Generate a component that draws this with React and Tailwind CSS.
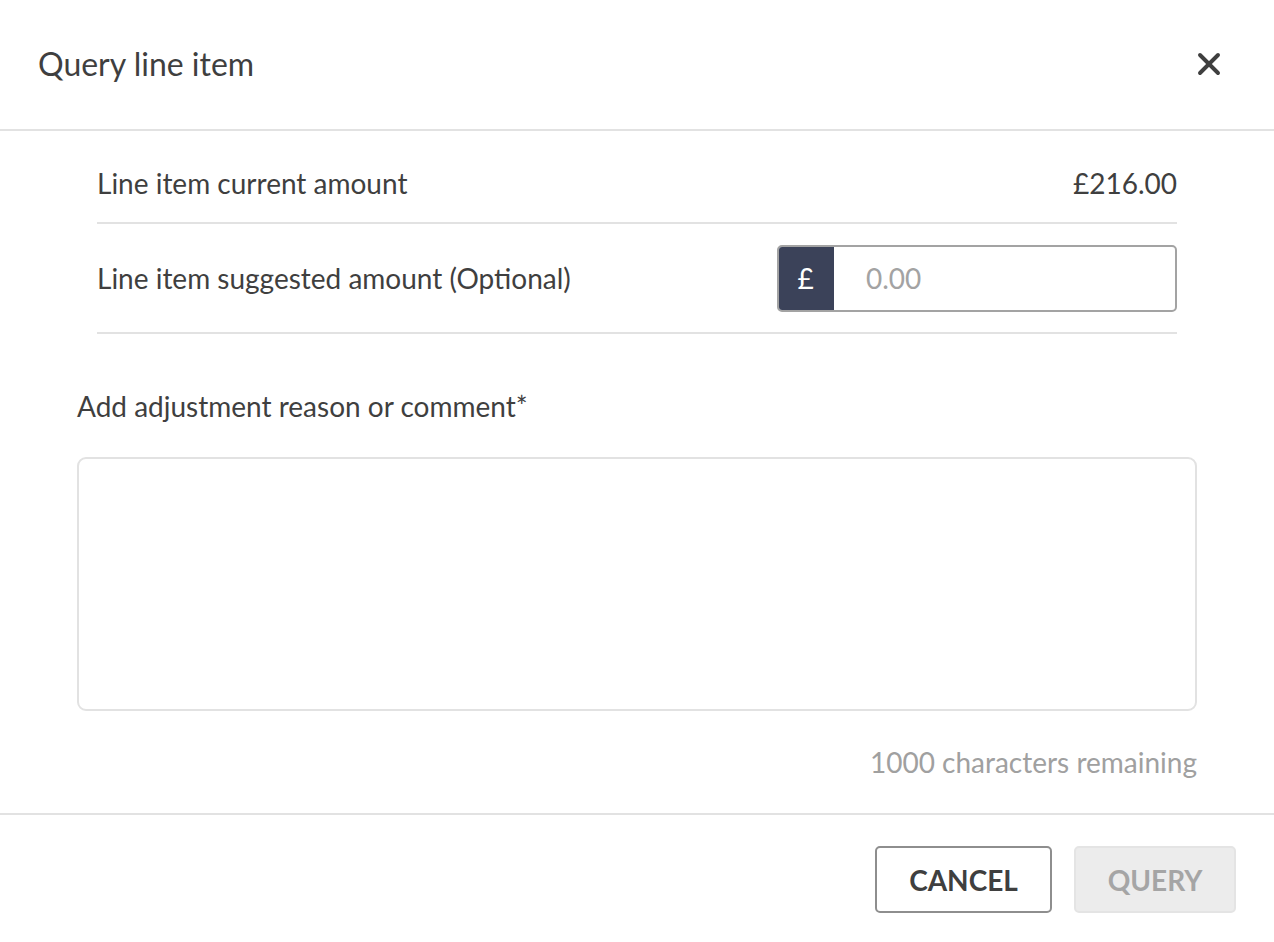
import { X } from 'lucide-react'

const font = { fontFamily: 'Lato, "Noto Sans", sans-serif' }

const App = () => {
  return (
    <div className="w-[1274px] h-[942px] bg-white flex flex-col text-[#3f3f3f]" style={font}>
      {/* header */}
      <div className="h-[131px] shrink-0 flex items-center justify-between pl-[38px] pr-[47px] border-b-2 border-[#e2e2e2]">
        <h1 className="text-[32px] leading-none -mt-[2px]">Query line item</h1>
        <button type="button" className="text-[#3f3f3f] -mt-[2px]">
          <X size={36} strokeWidth={2.6} />
        </button>
      </div>

      {/* body */}
      <div className="px-[77px] pt-[12px] pb-[34px]">
        <div className="mx-[20px]">
          <div className="h-[81px] flex items-center justify-between border-b-2 border-[#e2e2e2] text-[28px]">
            <span>Line item current amount</span>
            <span>£216.00</span>
          </div>
          <div className="h-[110px] flex items-center justify-between border-b-2 border-[#e2e2e2] text-[28px]">
            <span>Line item suggested amount (Optional)</span>
            <div className="flex w-[400px] h-[67px] rounded-[5px] overflow-hidden border-2 border-[#a3a3a3]">
              <div className="w-[57px] shrink-0 -ml-[2px] -my-[2px] bg-[#3b4259] text-white flex items-center justify-center text-[28px]">£</div>
              <input
                type="text"
                placeholder="0.00"
                className="flex-1 min-w-0 w-full pl-[32px] text-[28px] outline-none placeholder:text-[#a3a3a3]"
                style={font}
              />
            </div>
          </div>
        </div>

        <label className="block mt-[55px] text-[28px] leading-[34px]">Add adjustment reason or comment*</label>
        <textarea
          className="block w-full h-[254px] mt-[34px] rounded-[9px] border-2 border-[#e2e2e2] resize-none outline-none p-4 text-[28px]"
          style={font}
        />
        <div className="mt-[34px] text-right text-[28px] leading-[34px] text-[#a0a0a0]">1000 characters remaining</div>
      </div>

      {/* footer */}
      <div className="border-t-2 border-[#e2e2e2] flex justify-end gap-[22px] pt-[31px] pr-[38px]">
        <button
          type="button"
          className="w-[177px] h-[67px] rounded-[5px] border-2 border-[#8e8e8e] text-[28px] font-bold text-[#3f3f3f]"
        >
          CANCEL
        </button>
        <button
          type="button"
          disabled
          className="w-[162px] h-[67px] rounded-[5px] border-2 border-[#e4e4e4] bg-[#ececec] text-[28px] font-bold text-[#a5a5a5]"
        >
          QUERY
        </button>
      </div>
    </div>
  )
}

export default App
